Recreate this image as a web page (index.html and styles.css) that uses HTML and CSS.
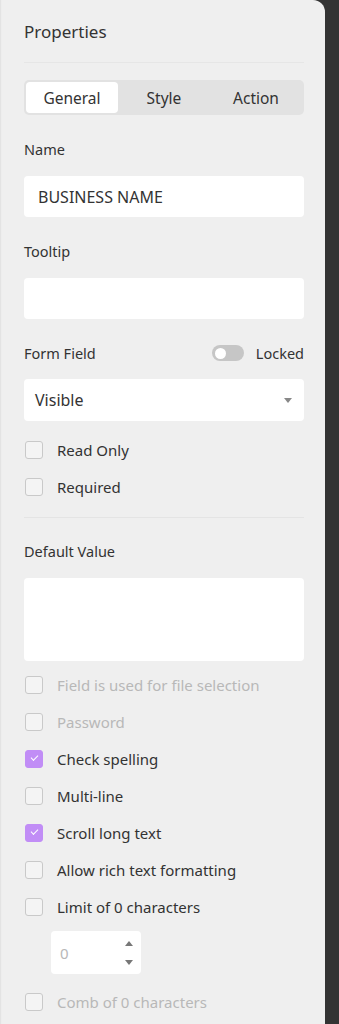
FILE: index.html
```html
<!DOCTYPE html>
<html>
  <head>
    <title>Properties</title>
    <meta charset='UTF-8'>
    <link rel="stylesheet" href="styles.css">
  </head>
  <body>
    <div class='panel'>
      <div class='panelHeader'>Properties</div>

      <div class='tabs'>
        <div class='tab active'>General</div>
        <div class='tab'>Style</div>
        <div class='tab'>Action</div>
      </div>

      <div class='fieldLabel'>Name</div>
      <div class='textInput'>BUSINESS NAME</div>

      <div class='fieldLabel'>Tooltip</div>
      <div class='textInput'></div>

      <div class='fieldLabel formField'>
        <span>Form Field</span>
        <span class='lockToggle'>
          <span class='switch'><span class='knob'></span></span>
          Locked
        </span>
      </div>
      <div class='selectBox'>
        <span>Visible</span>
        <span class='caret'></span>
      </div>

      <div class='checkList first'>
        <div class='checkRow'><span class='box'></span>Read Only</div>
        <div class='checkRow'><span class='box'></span>Required</div>
      </div>

      <div class='divider'></div>

      <div class='fieldLabel defaultLabel'>Default Value</div>
      <div class='textArea'></div>

      <div class='checkList second'>
        <div class='checkRow disabled'><span class='box'></span>Field is used for file selection</div>
        <div class='checkRow disabled'><span class='box'></span>Password</div>
        <div class='checkRow'><span class='box checked'></span>Check spelling</div>
        <div class='checkRow'><span class='box'></span>Multi-line</div>
        <div class='checkRow'><span class='box checked'></span>Scroll long text</div>
        <div class='checkRow'><span class='box'></span>Allow rich text formatting</div>
        <div class='checkRow'><span class='box'></span>Limit of 0 characters</div>
      </div>

      <div class='numberInput'>
        <span class='numberValue'>0</span>
        <span class='spinner'>
          <span class='up'></span>
          <span class='down'></span>
        </span>
      </div>

      <div class='checkList last'>
        <div class='checkRow disabled'><span class='box'></span>Comb of 0 characters</div>
      </div>
    </div>
  </body>
</html>
```

FILE: styles.css
```css
html, body {
  margin: 0;
  padding: 0;
  background-color: #333333;
}

body {
  font-family: "Noto Sans", "Open Sans", sans-serif;
  color: #333333;
  height: 1024px;
  overflow: hidden;
}

.panel {
  width: 325px;
  min-height: 1024px;
  box-sizing: border-box;
  padding: 0 21px 0 24px;
  background-color: #efefef;
  border-top-right-radius: 12px;
  box-shadow: inset 2px 0 1px -1px #e2e2e2;
}

.panelHeader {
  height: 62px;
  line-height: 64px;
  font-size: 17px;
  border-bottom: 1px solid #e6e6e6;
}

.tabs {
  display: grid;
  grid-template-columns: 1fr 1fr 1fr;
  margin-top: 17px;
  height: 35px;
  padding: 2px;
  box-sizing: border-box;
  background-color: #e2e2e2;
  border-radius: 5px;
}

.tab {
  display: flex;
  align-items: center;
  justify-content: center;
  font-size: 15.5px;
  border-radius: 4px;
}

.tab.active {
  background-color: #ffffff;
}

.fieldLabel {
  font-size: 14.5px;
  line-height: 20px;
  margin-top: 24px;
}

.textInput {
  margin-top: 17px;
  height: 41px;
  box-sizing: border-box;
  padding: 0 14px;
  line-height: 43px;
  font-size: 16px;
  background-color: #ffffff;
  border-radius: 4px;
}

.formField {
  display: flex;
  justify-content: space-between;
  align-items: center;
}

.lockToggle {
  display: flex;
  align-items: center;
  gap: 12px;
}

.switch {
  width: 32px;
  height: 16px;
  border-radius: 8px;
  background-color: #c6c6c6;
  display: flex;
  align-items: center;
  padding: 0 3px;
  box-sizing: border-box;
}

.knob {
  width: 11px;
  height: 11px;
  border-radius: 50%;
  background-color: #ffffff;
}

.selectBox {
  margin-top: 16px;
  height: 42px;
  box-sizing: border-box;
  padding: 0 12px 0 11px;
  display: flex;
  align-items: center;
  justify-content: space-between;
  font-size: 16px;
  background-color: #ffffff;
  border-radius: 4px;
}

.caret {
  width: 0;
  height: 0;
  border-left: 4px solid transparent;
  border-right: 4px solid transparent;
  border-top: 5px solid #888888;
}

.checkList.first {
  margin-top: 10px;
}

.checkList.second {
  margin-top: 5px;
}

.checkList.last {
  margin-top: 9px;
}

.checkRow {
  height: 37px;
  display: flex;
  align-items: center;
  font-size: 15px;
}

.checkRow.disabled {
  color: #b8b8b8;
}

.box {
  width: 18px;
  height: 18px;
  box-sizing: border-box;
  margin: 0 14px 0 1px;
  border: 1px solid #c9c9c9;
  border-radius: 3px;
  background-color: #f4f4f4;
  position: relative;
}

.box.checked {
  background-color: #c18df6;
  border-color: #c18df6;
}

.box.checked::after {
  content: '';
  position: absolute;
  left: 5px;
  top: 4px;
  width: 6px;
  height: 3px;
  border-left: 1.5px solid #ffffff;
  border-bottom: 1.5px solid #ffffff;
  transform: rotate(-45deg);
}

.divider {
  margin-top: 12px;
  border-top: 1px solid #e4e4e4;
}

.defaultLabel {
  margin-top: 23px;
}

.textArea {
  margin-top: 17px;
  height: 83px;
  background-color: #ffffff;
  border-radius: 4px;
}

.numberInput {
  margin: 6px 0 0 27px;
  width: 90px;
  height: 43px;
  box-sizing: border-box;
  padding: 0 8px 0 9px;
  display: flex;
  align-items: center;
  justify-content: space-between;
  background-color: #ffffff;
  border-radius: 4px;
}

.numberValue {
  font-size: 15px;
  color: #b8b8b8;
}

.spinner {
  display: flex;
  flex-direction: column;
  gap: 14px;
}

.up, .down {
  width: 0;
  height: 0;
  border-left: 4px solid transparent;
  border-right: 4px solid transparent;
}

.up {
  border-bottom: 5px solid #777777;
}

.down {
  border-top: 5px solid #777777;
}
```
